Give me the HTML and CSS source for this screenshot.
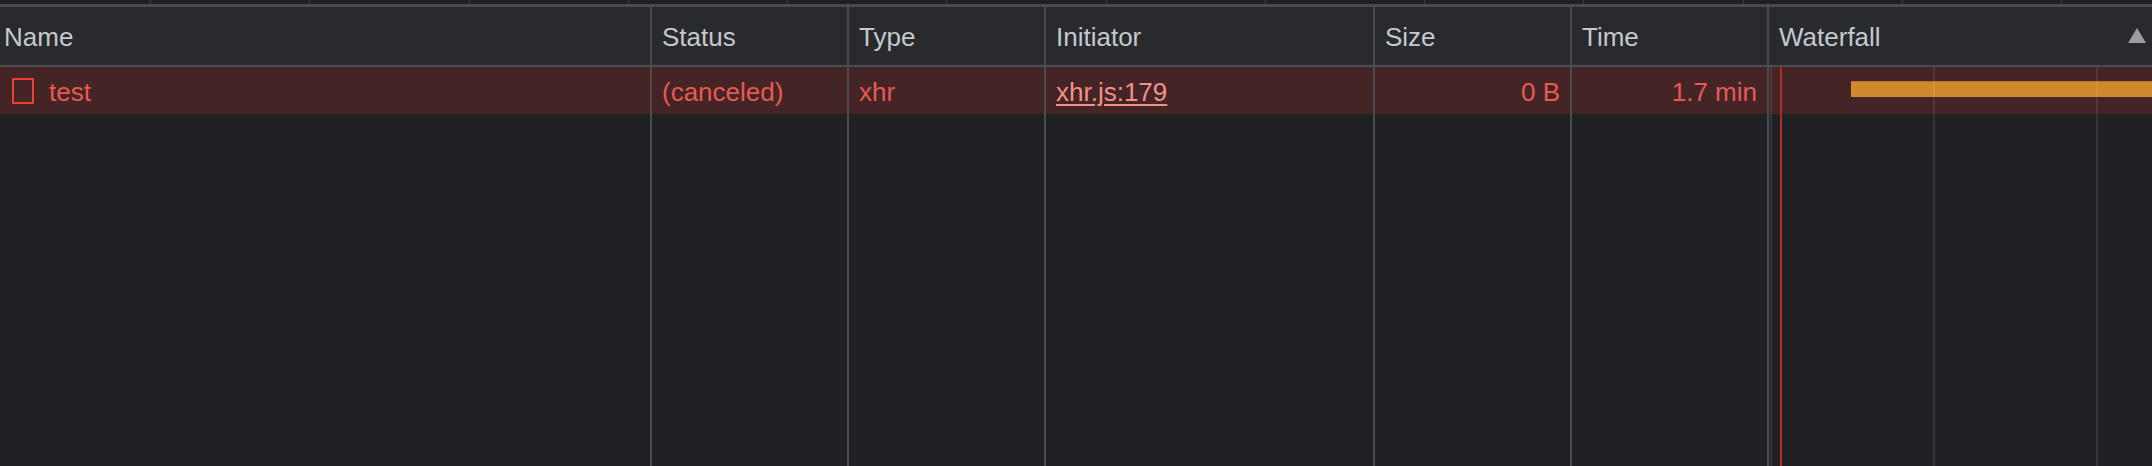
FILE: index.html
```html
<!DOCTYPE html>
<html>
<head>
<meta charset="utf-8">
<link rel="stylesheet" href="styles.css">
</head>
<body>
<div class="overview">
  <div class="tick first"></div><div class="tick"></div><div class="tick"></div><div class="tick"></div><div class="tick"></div><div class="tick"></div><div class="tick"></div><div class="tick"></div><div class="tick"></div><div class="tick"></div><div class="tick"></div><div class="tick"></div><div class="tick"></div><div class="tick"></div>
</div>
<div class="grid">
  <div class="hd c-name">Name</div>
  <div class="hd">Status</div>
  <div class="hd">Type</div>
  <div class="hd">Initiator</div>
  <div class="hd">Size</div>
  <div class="hd">Time</div>
  <div class="hd last wf-head">Waterfall
    <svg class="sort" width="18" height="15" viewBox="0 0 18 15"><polygon points="9,0 18,15 0,15" fill="#9a9ea4"/></svg>
  </div>

  <div class="cell c-name err"><span class="doc-icon"></span>test</div>
  <div class="cell err">(canceled)</div>
  <div class="cell err">xhr</div>
  <div class="cell err"><span class="link">xhr.js:179</span></div>
  <div class="cell err num">0 B</div>
  <div class="cell err num">1.7 min</div>

  <div class="wf-canvas">
    <div class="wf-row"></div>
    <div class="gline g1"></div>
    <div class="bar"></div>
    <div class="redline"></div>
    <div class="gline g2"></div>
    <div class="gline g3"></div>
  </div>

  <div class="fill"></div>
  <div class="fill"></div>
  <div class="fill"></div>
  <div class="fill"></div>
  <div class="fill"></div>
  <div class="fill"></div>
</div>
</body>
</html>
```

FILE: styles.css
```css
* { box-sizing: border-box; }
html, body {
  margin: 0;
  padding: 0;
  background: #202124;
  width: 2152px;
  height: 466px;
  overflow: hidden;
  font-family: "Liberation Sans", Arial, sans-serif;
}
.overview {
  display: flex;
  height: 7px;
  background: #1f2023;
  border-bottom: 3px solid #494b50;
}
.tick {
  flex: 0 0 159.25px;
  height: 4px;
  border-right: 1px solid #3d3e42;
}
.tick.first { flex-basis: 151px; }

.grid {
  display: grid;
  grid-template-columns: 652px 197px 197px 329px 197px 197px 383px;
  grid-template-rows: 60px 47px 1fr;
  height: 459px;
}
.hd {
  background: #292a2e;
  color: #c5c8cd;
  font-size: 26px;
  display: flex;
  align-items: center;
  padding-left: 10px;
  padding-top: 3px;
  border-right: 2px solid #4a4c50;
  border-bottom: 2px solid #4a4c50;
  white-space: nowrap;
}
.hd.c-name { padding-left: 4px; }
.wf-head { position: relative; }
.sort {
  position: absolute;
  right: 6px;
  top: 21px;
}
.last { border-right: none; }
.cell {
  background: #452426;
  font-size: 26px;
  display: flex;
  align-items: center;
  padding-left: 10px;
  padding-top: 3px;
  border-right: 2px solid #4a4c50;
  white-space: nowrap;
  color: #e65a52;
}
.cell.c-name { padding-left: 12px; }
.cell.num {
  justify-content: flex-end;
  padding-left: 0;
  padding-right: 10px;
}
.doc-icon {
  width: 22px;
  height: 26px;
  border: 2px solid #ea4335;
  border-radius: 1px;
  margin-right: 15px;
  margin-top: -2px;
  flex: 0 0 auto;
}
.link {
  color: #f0928a;
  text-decoration: underline;
  text-decoration-thickness: 2px;
  text-underline-offset: 3px;
}
.fill {
  border-right: 2px solid #4a4c50;
}
.wf-canvas {
  grid-column: 7;
  grid-row: 2 / 4;
  position: relative;
  overflow: hidden;
}
.wf-row {
  height: 47px;
  background: #452426;
}
.gline {
  position: absolute;
  top: 0;
  bottom: 0;
  width: 2px;
  background: rgba(255, 255, 255, 0.09);
}
.g1 { left: 1px; }
.g2 { left: 164px; }
.g3 { left: 327px; }
.redline {
  position: absolute;
  top: 0;
  bottom: 0;
  left: 11px;
  width: 2px;
  background: #b52a24;
}
.bar {
  position: absolute;
  left: 82px;
  right: 0;
  top: 14px;
  height: 16px;
  background: #d0892e;
  border-top: 1px solid #b7772a;
}
```
